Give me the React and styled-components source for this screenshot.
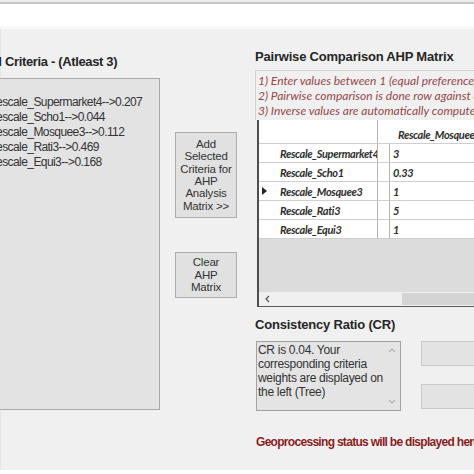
import React from "react";
import styled, { createGlobalStyle } from "styled-components";

const Global = createGlobalStyle`
  html, body { margin: 0; padding: 0; background: #ffffff; overflow: hidden; }
  #root { width: 474px; height: 474px; overflow: hidden; }
  * { box-sizing: border-box; }
`;

const Page = styled.div`
  width: 474px;
  height: 474px;
  overflow: hidden;
  background: #ffffff;
  font-family: "Liberation Sans", Arial, sans-serif;
  color: #2b2b2b;
`;

const TopStrip = styled.div`
  height: 29px;
  background: linear-gradient(#ececec 0 2px, #c6c6c6 2px 4px, #ffffff 4px 26px, #f8f8f8 26px);
`;

const Window = styled.div`
  height: 441px;
  background: #f0f0f0;
  border-left: 1px solid #e4e4e4;
  display: flex;
  align-items: flex-start;
`;

const LeftColumn = styled.div`
  flex: none;
  width: 211px;
  margin-left: -53px;
  padding-top: 25px;
  display: flex;
  flex-direction: column;
`;

const Title = styled.div`
  font-weight: 700;
  font-size: 13px;
  line-height: 16px;
  color: #262626;
  white-space: nowrap;
  letter-spacing: -0.2px;
`;

const ListTitle = styled(Title)`
  margin-left: 3px;
  letter-spacing: -0.35px;
`;

const ListBox = styled.div`
  margin-top: 8px;
  margin-left: 36px;
  width: 176px;
  height: 332px;
  background: #e3e3e3;
  border: 1px solid #a9a9a9;
  padding: 16px 0 0 3px;
  display: flex;
  flex-direction: column;
`;

const ListItem = styled.div`
  font-size: 12px;
  line-height: 15px;
  color: #333;
  white-space: nowrap;
  letter-spacing: -0.58px;
`;

const ButtonColumn = styled.div`
  flex: none;
  width: 62px;
  margin-left: 16px;
  padding-top: 103px;
  display: flex;
  flex-direction: column;
  gap: 34px;
`;

const PushButton = styled.div`
  height: ${(p) => p.$h}px;
  background: #e1e1e1;
  border: 1px solid #adadad;
  display: flex;
  align-items: center;
  justify-content: center;
  text-align: center;
  font-size: 11.5px;
  line-height: 12.4px;
  color: #333;
  letter-spacing: -0.2px;
`;

const RightColumn = styled.div`
  flex: none;
  width: 262px;
  margin-left: 18px;
  padding-top: 20px;
  display: flex;
  flex-direction: column;
`;

const InfoBox = styled.div`
  margin-top: 5px;
  height: 50px;
  border: 1px solid #d2d2d2;
  border-bottom: none;
  padding: 2px 0 0 2px;
  font-family: Lato, "Open Sans", sans-serif;
  font-style: italic;
  font-size: 12px;
  line-height: 15px;
  color: #96484a;
  white-space: nowrap;
  overflow: hidden;
`;

const Grid = styled.div`
  margin-left: 2px;
  height: 187px;
  background: #dcdcdc;
  border-left: 2px solid #4e4e4e;
  border-bottom: 1px solid #5a5a5a;
  display: flex;
  flex-direction: column;
`;

const Table = styled.div`
  display: grid;
  grid-template-columns: 119px 12px 1fr;
  grid-auto-rows: 19px;
  grid-template-rows: 24px;
  background: #ffffff;
`;

const cellFont = `
  font-family: Lato, "Open Sans", sans-serif;
  font-style: italic;
  font-weight: 700;
  font-size: 11px;
  letter-spacing: -0.35px;
  color: #2e2e2e;
  white-space: nowrap;
  overflow: hidden;
`;

const HeadCorner = styled.div`
  border-right: 1px solid #b4b4b4;
  border-bottom: 1px solid #cfcfcf;
`;

const HeadCell = styled.div`
  ${cellFont}
  grid-column: span 2;
  border-bottom: 1px solid #cfcfcf;
  padding: 8px 0 0 20px;
`;

const RowHead = styled.div`
  ${cellFont}
  display: flex;
  align-items: center;
  border-right: 1px solid #b4b4b4;
  border-bottom: 1px solid #cfcfcf;
`;

const Indicator = styled.span`
  flex: none;
  width: 21px;
  display: flex;
  align-items: center;
  padding-left: 3px;
`;

const Spacer = styled.div`
  border-right: 1px solid #b4b4b4;
  border-bottom: 1px solid #cfcfcf;
`;

const Cell = styled.div`
  ${cellFont}
  display: flex;
  align-items: center;
  padding-left: 3px;
  border-bottom: 1px solid #cfcfcf;
`;

const Filler = styled.div`
  flex: 1;
`;

const HScroll = styled.div`
  height: 14px;
  display: flex;
  background: #f0f0f0;
`;

const ScrollArrow = styled.div`
  flex: none;
  width: 17px;
  display: flex;
  align-items: center;
  justify-content: center;
`;

const Thumb = styled.div`
  margin-left: ${(p) => p.$offset}px;
  flex: 1;
  background: #d4d4d4;
  margin-top: 1px;
  margin-bottom: 1px;
`;

const SubTitle = styled(Title)`
  margin-top: 10px;
`;

const CrRow = styled.div`
  margin-top: 8px;
  display: flex;
  align-items: flex-start;
`;

const CrBox = styled.div`
  flex: none;
  width: 145px;
  height: 70px;
  margin-left: 1px;
  background: #e4e4e4;
  border: 1px solid #a3a3a3;
  display: flex;
`;

const CrText = styled.div`
  flex: 1;
  padding: 1px 0 0 1px;
  font-size: 12px;
  line-height: 14px;
  color: #333;
  letter-spacing: -0.3px;
`;

const VScroll = styled.div`
  flex: none;
  width: 16px;
  display: flex;
  flex-direction: column;
  justify-content: space-between;
  align-items: center;
  padding: 5px 0 4px;
`;

const SideButtons = styled.div`
  flex: 1;
  margin-left: 20px;
  display: flex;
  flex-direction: column;
  gap: 18px;
`;

const FlatButton = styled.div`
  height: 25px;
  background: #e3e3e3;
  border: 1px solid #c9c9c9;
`;

const Status = styled.div`
  margin-top: 23px;
  margin-left: 1px;
  font-weight: 700;
  font-size: 12px;
  line-height: 16px;
  color: #8a1d1f;
  white-space: nowrap;
  letter-spacing: -0.7px;
`;

const Chevron = ({ dir, color = "#a0a0a0" }) => {
  const d = {
    left: "M5 1 L2 4 L5 7",
    up: "M1 5 L4 2 L7 5",
    down: "M1 2 L4 5 L7 2",
  }[dir];
  return (
    <svg width="8" height="8" viewBox="0 0 8 8">
      <path d={d} fill="none" stroke={color} strokeWidth="1.2" />
    </svg>
  );
};

const criteria = [
  "Rescale_Supermarket4-->0.207",
  "Rescale_Scho1-->0.044",
  "Rescale_Mosquee3-->0.112",
  "Rescale_Rati3-->0.469",
  "Rescale_Equi3-->0.168",
];

const rows = [
  { name: "Rescale_Supermarket4", value: "3" },
  { name: "Rescale_Scho1", value: "0.33" },
  { name: "Rescale_Mosquee3", value: "1", current: true },
  { name: "Rescale_Rati3", value: "5" },
  { name: "Rescale_Equi3", value: "1" },
];

export default function App() {
  return (
    <Page>
      <Global />
      <TopStrip />
      <Window>
        <LeftColumn>
          <ListTitle>Selected Criteria - (Atleast 3)</ListTitle>
          <ListBox>
            {criteria.map((c) => (
              <ListItem key={c}>{c}</ListItem>
            ))}
          </ListBox>
        </LeftColumn>

        <ButtonColumn>
          <PushButton $h={86}>
            Add
            <br />
            Selected
            <br />
            Criteria for
            <br />
            AHP
            <br />
            Analysis
            <br />
            Matrix &gt;&gt;
          </PushButton>
          <PushButton $h={46}>
            Clear
            <br />
            AHP
            <br />
            Matrix
          </PushButton>
        </ButtonColumn>

        <RightColumn>
          <Title>Pairwise Comparison AHP Matrix</Title>
          <InfoBox>
            <div>1) Enter values between 1 (equal preference) and 9 (extreme preference)</div>
            <div>2) Pairwise comparison is done row against column</div>
            <div>3) Inverse values are automatically computed</div>
          </InfoBox>
          <Grid>
            <Table>
              <HeadCorner />
              <HeadCell>Rescale_Mosquee3</HeadCell>
              {rows.map((r) => (
                <React.Fragment key={r.name}>
                  <RowHead>
                    <Indicator>
                      {r.current && (
                        <svg width="5" height="8" viewBox="0 0 5 8">
                          <path d="M0 0 L5 4 L0 8 Z" fill="#222" />
                        </svg>
                      )}
                    </Indicator>
                    {r.name}
                  </RowHead>
                  <Spacer />
                  <Cell>{r.value}</Cell>
                </React.Fragment>
              ))}
            </Table>
            <Filler />
            <HScroll>
              <ScrollArrow>
                <Chevron dir="left" color="#555" />
              </ScrollArrow>
              <Thumb $offset={126} />
            </HScroll>
          </Grid>

          <SubTitle>Consistency Ratio (CR)</SubTitle>
          <CrRow>
            <CrBox>
              <CrText>
                CR is 0.04. Your corresponding criteria weights are displayed on the left (Tree)
              </CrText>
              <VScroll>
                <Chevron dir="up" color="#b0b0b0" />
                <Chevron dir="down" color="#b0b0b0" />
              </VScroll>
            </CrBox>
            <SideButtons>
              <FlatButton />
              <FlatButton />
            </SideButtons>
          </CrRow>
          <Status>Geoprocessing status will be displayed here</Status>
        </RightColumn>
      </Window>
    </Page>
  );
}
